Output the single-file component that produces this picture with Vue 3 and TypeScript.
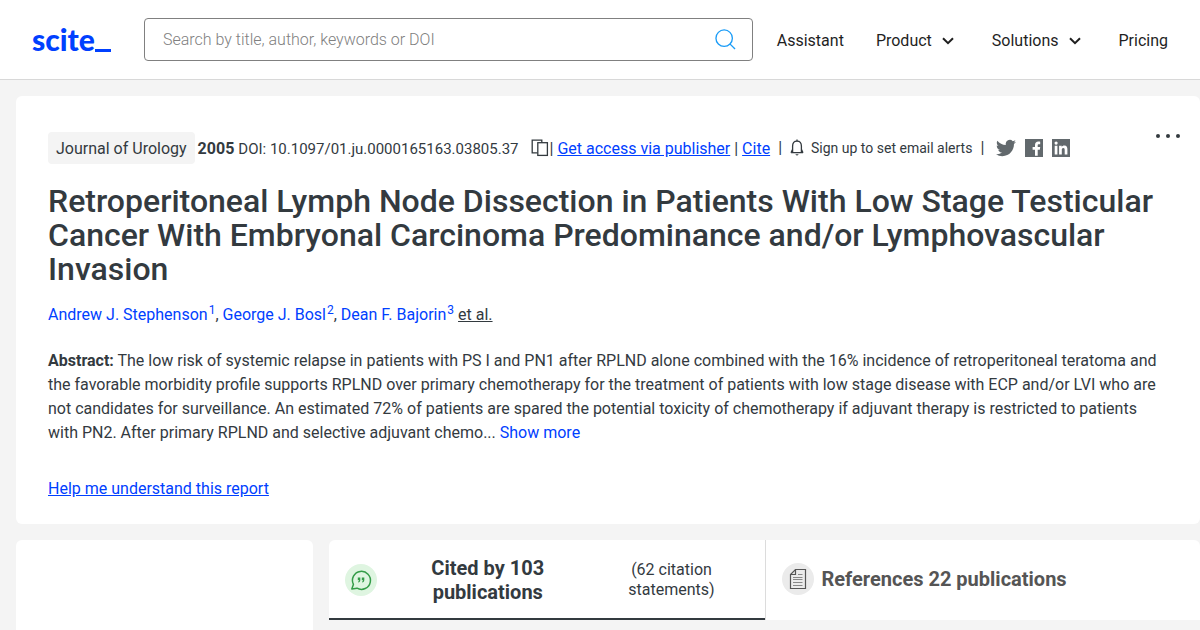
<script setup lang="ts">
import { ref } from 'vue'

interface NavItem {
  label: string
  menu: boolean
}

interface Author {
  name: string
  affiliation: number
}

const query = ref<string>('')

const navItems: NavItem[] = [
  { label: 'Assistant', menu: false },
  { label: 'Product', menu: true },
  { label: 'Solutions', menu: true },
  { label: 'Pricing', menu: false },
]

const authors: Author[] = [
  { name: 'Andrew J. Stephenson', affiliation: 1 },
  { name: 'George J. Bosl', affiliation: 2 },
  { name: 'Dean F. Bajorin', affiliation: 3 },
]
</script>

<template>
  <div class="page">
    <header class="topbar">
      <a class="logo" href="#">scite<span class="logo-bar"></span></a>
      <form class="search" role="search" @submit.prevent>
        <input
          v-model="query"
          class="search-input"
          type="text"
          aria-label="Search"
          placeholder="Search by title, author, keywords or DOI"
        />
        <button class="search-button" type="submit" aria-label="Submit search">
          <svg width="21" height="21" viewBox="0 0 22 22" fill="none" stroke="#1a9cf7" stroke-width="1.4">
            <circle cx="9.6" cy="9.6" r="8.6" />
            <path d="M15.6 15.6 21 21" />
          </svg>
        </button>
      </form>
      <nav class="nav">
        <template v-for="item in navItems" :key="item.label">
          <button v-if="item.menu" class="nav-item" type="button">
            {{ item.label }}
            <svg class="chevron" width="12" height="8" viewBox="0 0 12 8" fill="none" stroke="#1f1f1f" stroke-width="2">
              <path d="M1 1.2 6 6.2 11 1.2" />
            </svg>
          </button>
          <a v-else class="nav-item" href="#">{{ item.label }}</a>
        </template>
      </nav>
    </header>

    <main class="content">
      <article class="paper">
        <div class="meta">
          <a class="journal" href="#">Journal of Urology</a>
          <b class="year">2005</b>
          <span class="doi">DOI: 10.1097/01.ju.0000165163.03805.37</span>
          <button class="copy" type="button" aria-label="Copy DOI">
            <svg width="18" height="18" viewBox="0 0 18 18" fill="none" stroke="#333a3f" stroke-width="1.3">
              <path d="M6.5 13.9H1.2V1.2h9.6v2" />
              <rect x="6.8" y="3.7" width="9.6" height="12.7" />
            </svg>
          </button>
          <span class="links">| <a href="#">Get access via publisher</a> | <a href="#">Cite</a></span>
          <span class="divider">|</span>
          <button class="alerts" type="button">
            <svg width="14" height="18" viewBox="0 0 14 18" fill="none" stroke="#333a3f" stroke-width="1.3">
              <path d="M1 13.7h12M2.6 13.5V7.2C2.6 4.2 4.3 2.2 7 2.2s4.4 2 4.4 5v6.3M2.6 10.4 1 13.7M11.4 10.4 13 13.7" />
              <path d="M7 2.2V.5" />
              <path d="M5.2 15.2h3.6L7 16.8z" fill="#333a3f" stroke="none" />
            </svg>
            Sign up to set email alerts
          </button>
          <span class="divider">|</span>
          <span class="socials">
            <a href="#" aria-label="Share on Twitter">
              <svg width="20" height="18" viewBox="0 1.5 24 21" fill="#62696d">
                <path d="M23.95 4.57a10 10 0 0 1-2.82.78 4.96 4.96 0 0 0 2.16-2.73c-.95.56-2 .96-3.13 1.18a4.92 4.92 0 0 0-8.38 4.48C7.69 8.1 4.07 6.13 1.64 3.16a4.82 4.82 0 0 0-.67 2.48c0 1.7.87 3.21 2.19 4.1a4.9 4.9 0 0 1-2.23-.62v.06a4.92 4.92 0 0 0 3.95 4.83 5 5 0 0 1-2.21.08 4.94 4.94 0 0 0 4.6 3.42A9.87 9.87 0 0 1 0 19.54a13.99 13.99 0 0 0 7.55 2.21c9.05 0 14-7.5 14-13.98 0-.21 0-.42-.02-.63a9.94 9.94 0 0 0 2.46-2.55z" />
              </svg>
            </a>
            <a href="#" aria-label="Share on Facebook">
              <svg width="18" height="18" viewBox="0 0 18 18">
                <rect width="18" height="18" fill="#62696d" />
                <path d="M10 16.8v-6.1H7.6V7.9H10V6.2c0-2.3 1.3-3.6 3.4-3.6.8 0 1.5.1 1.8.2v2.4H14c-1.1 0-1.3.5-1.3 1.3v1.4h2.5l-.4 2.8h-2.1v6.1z" fill="#fff" />
              </svg>
            </a>
            <a href="#" aria-label="Share on LinkedIn">
              <svg width="18" height="18" viewBox="0 0 18 18">
                <rect width="18" height="18" fill="#62696d" />
                <circle cx="4.1" cy="4.1" r="1.6" fill="#fff" />
                <path d="M2.7 6.8h2.7v8.6H2.7zM7.1 6.8h2.6V8c.5-.8 1.4-1.4 2.6-1.4 2.6 0 3.1 1.7 3.1 4v4.8h-2.7v-4.3c0-1 0-2.2-1.4-2.2s-1.5 1-1.5 2.1v4.4H7.1z" fill="#fff" />
              </svg>
            </a>
          </span>
          <button class="more" type="button" aria-label="More options">
            <i></i><i></i><i></i>
          </button>
        </div>

        <h1>
          Retroperitoneal Lymph Node Dissection in Patients With Low Stage Testicular Cancer With Embryonal Carcinoma
          Predominance and/or Lymphovascular Invasion
        </h1>

        <p class="authors">
          <template v-for="(author, i) in authors" :key="author.name">
            <a href="#">{{ author.name }}<sup>{{ author.affiliation }}</sup></a>{{ i < authors.length - 1 ? ', ' : ' ' }}
          </template>
          <button class="et-al" type="button">et al.</button>
        </p>

        <p class="abstract">
          <b>Abstract:</b> The low risk of systemic relapse in patients with PS I and PN1 after RPLND alone combined
          with the 16% incidence of retroperitoneal teratoma and the favorable morbidity profile supports RPLND over
          primary chemotherapy for the treatment of patients with low stage disease with ECP and/or LVI who are not
          candidates for surveillance. An estimated 72% of patients are spared the potential toxicity of chemotherapy
          if adjuvant therapy is restricted to patients with PN2. After primary RPLND and selective adjuvant chemo...
          <button class="show-more" type="button">Show more</button>
        </p>

        <a class="help" href="#">Help me understand this report</a>
      </article>

      <div class="columns">
        <aside class="filters"></aside>
        <section class="tabs" role="tablist">
          <button class="tab active" type="button" role="tab" aria-selected="true">
            <svg class="tab-icon" width="32" height="32" viewBox="0 0 32 32" fill="none">
              <circle cx="16" cy="16" r="16" fill="#dff5e1" />
              <path d="M8.4 20.4A9 9 0 1 1 12 24.2L6.8 25z" stroke="#349c48" stroke-width="1.5" stroke-linejoin="round" />
              <path d="M12.8 13.5h2.5v2.6c0 1.4-.8 2.3-2.1 2.5v-1c.6-.2.9-.6.9-1.3h-1.3zM16.8 13.5h2.5v2.6c0 1.4-.8 2.3-2.1 2.5v-1c.6-.2.9-.6.9-1.3h-1.3z" fill="#349c48" />
            </svg>
            <span class="tab-title">Cited by 103 publications</span>
            <span class="tab-note">(62 citation statements)</span>
          </button>
          <button class="tab" type="button" role="tab" aria-selected="false">
            <svg class="tab-icon" width="32" height="32" viewBox="0 0 32 32" fill="none">
              <circle cx="16" cy="16" r="16" fill="#ebebeb" />
              <path d="M13.5 6.5h10v19h-15v-14z" stroke="#555" stroke-width="1.2" />
              <path d="M13.5 6.5v5h-5" stroke="#555" stroke-width="1.2" />
              <path d="M16 11.5h4.5M11 14.5h9.5M11 16.5h9.5M11 19.5h9.5M11 22.5h9.5" stroke="#888" />
            </svg>
            <span class="tab-title">References 22 publications</span>
          </button>
        </section>
      </div>
    </main>
  </div>
</template>

<style>
body {
  background: #f4f4f4;
}
</style>

<style scoped>
.page {
  font-family: Roboto, 'Liberation Sans', sans-serif;
  font-size: 16px;
  line-height: 24px;
  color: #333a3f;
}

.page * {
  box-sizing: border-box;
}

a {
  color: #0040ff;
}

button {
  padding: 0;
  border: 0;
  background: none;
  color: inherit;
  font: inherit;
  cursor: pointer;
}

svg {
  display: block;
  flex: none;
}

.topbar {
  display: flex;
  align-items: center;
  height: 80px;
  padding: 0 32px;
  border-bottom: 1px solid #d8d8d8;
  background: #fff;
}

.logo {
  display: flex;
  width: 112px;
  padding-bottom: 1px;
  color: #0040ff;
  font-family: Lato, sans-serif;
  font-size: 30px;
  font-weight: 900;
  text-decoration: none;
}

.logo-bar {
  width: 16px;
  height: 3px;
  margin-top: 22px;
  background: #0040ff;
}

.search {
  display: flex;
  align-items: center;
  flex: 1;
  height: 43px;
  padding: 0 16px 0 18px;
  border: 1px solid #808080;
  border-radius: 4px;
}

.search-input {
  flex: 1;
  min-width: 0;
  padding: 0;
  border: 0;
  outline: 0;
  background: none;
  color: #333a3f;
  font: inherit;
  font-weight: 300;
}

.search-input::placeholder {
  color: #808080;
}

.nav {
  display: flex;
  gap: 32px;
  margin-left: 24px;
  padding-top: 2px;
}

.nav-item {
  display: flex;
  align-items: center;
  color: #1f1f1f;
  text-decoration: none;
}

.chevron {
  margin: 0 6px 0 10px;
}

.content {
  padding: 16px 0 0 16px;
}

.paper {
  padding: 36px 32px 23px;
  border-radius: 6px;
  background: #fff;
}

.meta {
  display: flex;
  align-items: center;
  white-space: nowrap;
}

.journal {
  padding: 5px 8px 3px;
  border-radius: 4px;
  background: #f4f4f4;
  color: inherit;
  text-decoration: none;
}

.year {
  margin-left: 3px;
  padding-top: 2px;
}

.doi {
  margin-left: 4px;
  padding-top: 1px;
  font-size: 15px;
}

.copy {
  margin-left: 12px;
}

.links {
  margin-left: 1px;
  padding-top: 2px;
}

.divider {
  margin-left: 8px;
}

.alerts {
  display: flex;
  align-items: center;
  gap: 7px;
  margin-left: 8px;
  font-size: 14px;
}

.socials {
  display: flex;
  gap: 9px;
  margin-left: 12px;
}

.more {
  display: flex;
  gap: 6px;
  margin: 0 -12px 24px auto;
}

.more i {
  width: 4px;
  height: 4px;
  border-radius: 50%;
  background: #333a3f;
}

h1 {
  margin: 20px 0 0;
  font-size: 32px;
  font-weight: 500;
  line-height: 34px;
}

.authors {
  margin: 17px 0 0;
}

.authors a {
  text-decoration: none;
}

sup {
  margin-left: 1px;
  font-size: 12px;
  line-height: 0;
}

.et-al {
  text-decoration: underline;
}

.abstract {
  margin: 22px 0 0;
}

.show-more {
  color: #0040ff;
}

.help {
  display: inline-block;
  margin-top: 32px;
}

.columns {
  display: grid;
  grid-template-columns: 297px 1fr;
  gap: 16px;
  margin-top: 16px;
}

.filters {
  min-height: 120px;
  border-radius: 6px 6px 0 0;
  background: #fff;
}

.tabs {
  display: grid;
  grid-template-columns: 1fr 1fr;
  align-self: start;
  border-radius: 6px 6px 0 0;
  background: #fff;
}

.tab {
  display: flex;
  align-items: center;
  min-height: 80px;
  padding: 0 16px 2px;
  border-left: 1px solid #dcdcdc;
  color: #555;
}

.tab.active {
  padding-bottom: 0;
  border-left: 0;
  box-shadow: inset 0 -2px #333a3f;
  color: #333a3f;
}

.tab-title {
  margin-left: 8px;
  font-size: 20px;
  font-weight: 700;
}

.active .tab-title {
  flex: 1;
  margin-left: 4px;
  padding: 0 40px;
}

.tab-note {
  width: 154px;
  padding: 0 16px;
  line-height: 20px;
}
</style>
